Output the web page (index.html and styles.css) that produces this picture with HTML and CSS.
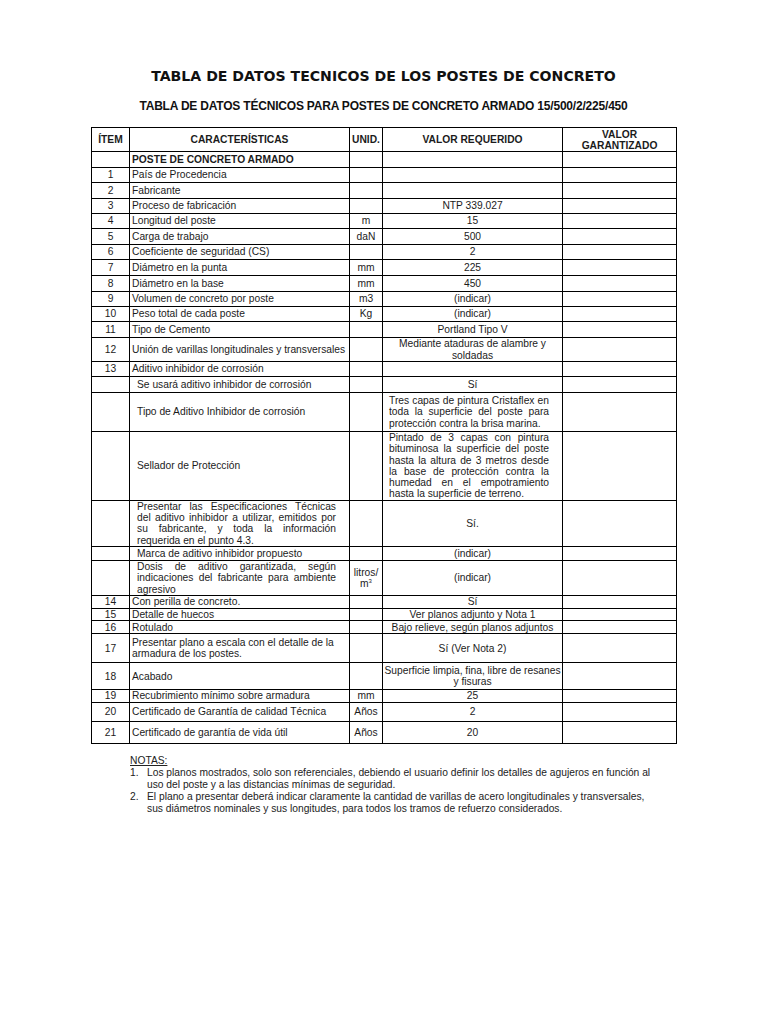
FILE: index.html
```html
<!DOCTYPE html>
<html lang="es">
<head>
<meta charset="utf-8">
<title>Tabla de datos técnicos de los postes de concreto</title>
<link rel="stylesheet" href="styles.css">
</head>
<body>
<div class="page">
  <h1 class="title">TABLA DE DATOS TECNICOS DE LOS POSTES DE CONCRETO</h1>
  <h2 class="subtitle">TABLA DE DATOS TÉCNICOS PARA POSTES DE CONCRETO ARMADO 15/500/2/225/450</h2>

  <table class="spec">
    <colgroup>
      <col class="c-item"><col class="c-char"><col class="c-unid"><col class="c-req"><col class="c-gar">
    </colgroup>
    <thead>
      <tr class="h24">
        <th>ÍTEM</th>
        <th>CARACTERÍSTICAS</th>
        <th>UNID.</th>
        <th>VALOR REQUERIDO</th>
        <th class="two">VALOR<br>GARANTIZADO</th>
      </tr>
    </thead>
    <tbody>
      <tr class="h16"><td></td><td class="b">POSTE DE CONCRETO ARMADO</td><td></td><td></td><td></td></tr>
      <tr class="h15"><td class="c">1</td><td>País de Procedencia</td><td></td><td></td><td></td></tr>
      <tr class="h16"><td class="c">2</td><td>Fabricante</td><td></td><td></td><td></td></tr>
      <tr class="h15"><td class="c">3</td><td>Proceso de fabricación</td><td></td><td class="c">NTP 339.027</td><td></td></tr>
      <tr class="h15"><td class="c">4</td><td>Longitud del poste</td><td class="c">m</td><td class="c">15</td><td></td></tr>
      <tr class="h16"><td class="c">5</td><td>Carga de trabajo</td><td class="c">daN</td><td class="c">500</td><td></td></tr>
      <tr class="h15"><td class="c">6</td><td>Coeficiente de seguridad (CS)</td><td></td><td class="c">2</td><td></td></tr>
      <tr class="h16"><td class="c">7</td><td>Diámetro en la punta</td><td class="c">mm</td><td class="c">225</td><td></td></tr>
      <tr class="h16"><td class="c">8</td><td>Diámetro en la base</td><td class="c">mm</td><td class="c">450</td><td></td></tr>
      <tr class="h15"><td class="c">9</td><td>Volumen de concreto por poste</td><td class="c">m3</td><td class="c">(indicar)</td><td></td></tr>
      <tr class="h15"><td class="c">10</td><td>Peso total de cada poste</td><td class="c">Kg</td><td class="c">(indicar)</td><td></td></tr>
      <tr class="h16"><td class="c">11</td><td>Tipo de Cemento</td><td></td><td class="c">Portland Tipo V</td><td></td></tr>
      <tr class="h24"><td class="c">12</td><td>Unión de varillas longitudinales y transversales</td><td></td><td class="c">Mediante ataduras de alambre y<br>soldadas</td><td></td></tr>
      <tr class="h15"><td class="c">13</td><td>Aditivo inhibidor de corrosión</td><td></td><td></td><td></td></tr>
      <tr class="h16"><td></td><td class="ind">Se usará aditivo inhibidor de corrosión</td><td></td><td class="c">Sí</td><td></td></tr>
      <tr class="h39">
        <td></td>
        <td class="ind">Tipo de Aditivo Inhibidor de corrosión</td>
        <td></td>
        <td class="jreq">
          <span class="jl">Tres capas de pintura Cristaflex en</span>
          <span class="jl">toda la superficie del poste para</span>
          <span class="ll">protección contra la brisa marina.</span>
        </td>
        <td></td>
      </tr>
      <tr class="h68">
        <td></td>
        <td class="ind">Sellador de Protección</td>
        <td></td>
        <td class="jreq tight">
          <span class="jl">Pintado de 3 capas con pintura</span>
          <span class="jl">bituminosa la superficie del poste</span>
          <span class="jl">hasta la altura de 3 metros desde</span>
          <span class="jl">la base de protección contra la</span>
          <span class="jl">humedad en el empotramiento</span>
          <span class="ll">hasta la superficie de terreno.</span>
        </td>
        <td></td>
      </tr>
      <tr class="h46">
        <td></td>
        <td class="jchar tight">
          <span class="jl">Presentar las Especificaciones Técnicas</span>
          <span class="jl">del aditivo inhibidor a utilizar, emitidos por</span>
          <span class="jl">su fabricante, y toda la información</span>
          <span class="ll">requerida en el punto 4.3.</span>
        </td>
        <td></td>
        <td class="c">Sí.</td>
        <td></td>
      </tr>
      <tr class="h14"><td></td><td class="ind">Marca de aditivo inhibidor propuesto</td><td></td><td class="c">(indicar)</td><td></td></tr>
      <tr class="h35">
        <td></td>
        <td class="jchar">
          <span class="jl">Dosis de aditivo garantizada, según</span>
          <span class="jl">indicaciones del fabricante para ambiente</span>
          <span class="ll">agresivo</span>
        </td>
        <td class="c">litros/<br>m<sup>3</sup></td>
        <td class="c">(indicar)</td>
        <td></td>
      </tr>
      <tr class="h12"><td class="c">14</td><td>Con perilla de concreto.</td><td></td><td class="c">Sí</td><td></td></tr>
      <tr class="h12"><td class="c">15</td><td>Detalle de huecos</td><td></td><td class="c">Ver planos adjunto y Nota 1</td><td></td></tr>
      <tr class="h13"><td class="c">16</td><td>Rotulado</td><td></td><td class="c">Bajo relieve, según planos adjuntos</td><td></td></tr>
      <tr class="h29"><td class="c">17</td><td>Presentar plano a escala con el detalle de la<br>armadura de los postes.</td><td></td><td class="c">Sí (Ver Nota 2)</td><td></td></tr>
      <tr class="h27"><td class="c">18</td><td>Acabado</td><td></td><td class="c wide">Superficie limpia, fina, libre de resanes<br>y fisuras</td><td></td></tr>
      <tr class="h12"><td class="c">19</td><td>Recubrimiento mínimo sobre armadura</td><td class="c">mm</td><td class="c">25</td><td></td></tr>
      <tr class="h19"><td class="c">20</td><td>Certificado de Garantía de calidad Técnica</td><td class="c">Años</td><td class="c">2</td><td></td></tr>
      <tr class="h22"><td class="c">21</td><td>Certificado de garantía de vida útil</td><td class="c">Años</td><td class="c">20</td><td></td></tr>
    </tbody>
  </table>

  <div class="notes">
    <p class="notes-head">NOTAS:</p>
    <ol class="notes-list">
      <li><span class="num">1.</span><span class="txt">Los planos mostrados, solo son referenciales, debiendo el usuario definir los detalles de agujeros en función al<br>uso del poste y a las distancias mínimas de seguridad.</span></li>
      <li><span class="num">2.</span><span class="txt">El plano a presentar deberá indicar claramente la cantidad de varillas de acero longitudinales y transversales,<br>sus diámetros nominales y sus longitudes, para todos los tramos de refuerzo considerados.</span></li>
    </ol>
  </div>
</div>
</body>
</html>
```

FILE: styles.css
```css
* { box-sizing: border-box; }

html, body {
  margin: 0;
  padding: 0;
  background: #ffffff;
}

body {
  font-family: "Liberation Sans", Arial, sans-serif;
  color: #1b1b1b;
}

.page {
  width: 585px;
  margin-left: 91px;
  padding-top: 68px;
}

.title {
  margin: 0;
  font-family: "DejaVu Sans", sans-serif;
  font-weight: bold;
  font-size: 14.1px;
  line-height: 16px;
  text-align: center;
  white-space: nowrap;
  color: #111111;
}

.subtitle {
  margin: 15px 0 0;
  font-family: "Liberation Sans", Arial, sans-serif;
  font-weight: bold;
  font-size: 12px;
  line-height: 14px;
  letter-spacing: -0.2px;
  text-align: center;
  white-space: nowrap;
  color: #111111;
}

.spec {
  margin-top: 14px;
  width: 585px;
  border-collapse: collapse;
  table-layout: fixed;
  font-size: 10.25px;
  line-height: 11.5px;
}

.c-item { width: 38px; }
.c-char { width: 220px; }
.c-unid { width: 33px; }
.c-req  { width: 180px; }
.c-gar  { width: 114px; }

.spec th,
.spec td {
  border: 1px solid #000000;
  padding: 0 1px 0 2px;
  vertical-align: middle;
  text-align: left;
  white-space: nowrap;
  overflow: hidden;
}

.spec th {
  font-weight: bold;
  text-align: center;
  padding: 0;
}

.spec th.two { line-height: 11px; }

.spec td.c { text-align: center; padding: 0; }
.spec td.b { font-weight: bold; }
.spec td.ind { padding-left: 7px; }
.spec td.wide { padding: 0; }

.spec td.jreq { padding: 0 13px 0 6px; }
.spec td.jchar { padding: 0 13px 0 7px; }
.spec td.tight { line-height: 11.3px; }

.jl {
  display: block;
  text-align: justify;
  text-align-last: justify;
}

.ll {
  display: block;
  text-align: left;
}

.spec sup {
  font-size: 6px;
  line-height: 0;
  vertical-align: 4px;
}

.h12 { height: 12px; }
.h13 { height: 13px; }
.h14 { height: 14px; }
.h15 { height: 15px; }
.h16 { height: 16px; }
.h19 { height: 19px; }
.h22 { height: 22px; }
.h24 { height: 24px; }
.h27 { height: 27px; }
.h29 { height: 29px; }
.h35 { height: 35px; }
.h39 { height: 39px; }
.h46 { height: 46px; }
.h68 { height: 68px; }

.notes {
  margin-top: 11px;
  padding-left: 39px;
  font-size: 10.25px;
  line-height: 12px;
  color: #222222;
}

.notes-head {
  margin: 0;
  text-decoration: underline;
}

.notes-list {
  margin: 0;
  padding: 0;
  list-style: none;
}

.notes-list li {
  display: flex;
}

.notes-list .num {
  flex: 0 0 17px;
}

.notes-list .txt {
  white-space: nowrap;
}
```
